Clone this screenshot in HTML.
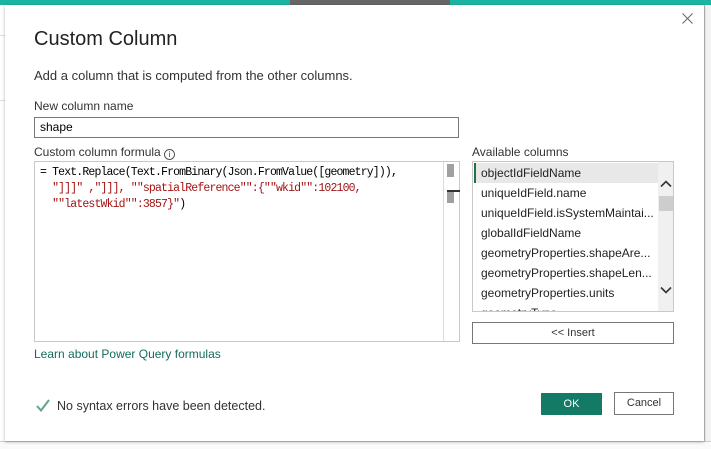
<!DOCTYPE html>
<html><head><style>
*{margin:0;padding:0;box-sizing:border-box}
body{width:711px;height:449px;overflow:hidden;background:#fff;font-family:"Liberation Sans",sans-serif;position:relative;color:#333}
.a{position:absolute}
.t{font-size:12px;color:#333;white-space:nowrap}
.code{font-family:"Liberation Mono",monospace;font-size:11.5px;letter-spacing:-0.85px;line-height:16px;white-space:pre;color:#000}
.s{color:#a31515}
.li{position:absolute;left:1px;width:184px;height:20px;font-size:12px;line-height:20px;padding-left:7px;color:#222;white-space:nowrap;overflow:hidden}
</style></head><body>
<div class="a" style="left:0;top:0;width:711px;height:5px;background:#1bb3a1"></div>
<div class="a" style="left:290px;top:0;width:160px;height:5px;background:#666"></div>
<div class="a" style="left:0;top:35px;width:5px;height:1px;background:#ddd"></div>
<div class="a" style="left:0;top:100px;width:5px;height:1px;background:#ddd"></div>
<div class="a" style="left:704px;top:5px;width:7px;height:444px;background:#f3f3f3;border-left:1px solid #bbb"></div>
<div class="a" style="left:0;top:441px;width:711px;height:8px;background:#fafafa;border-top:1px solid #ccc"></div>
<div class="a" style="left:5px;top:5px;width:699px;height:436px;background:#fff;box-shadow:0 1px 3px rgba(0,0,0,.3)"></div>
<svg class="a" style="left:682px;top:13px" width="11" height="11"><path d="M0.5 0.5L10.5 10.5M10.5 0.5L0.5 10.5" stroke="#666" stroke-width="1"/></svg>
<div class="a" style="left:34px;top:28px;font-size:20px;color:#222">Custom Column</div>
<div class="a t" style="left:34px;top:68px;font-size:13px">Add a column that is computed from the other columns.</div>
<div class="a t" style="left:34px;top:99px">New column name</div>
<div class="a" style="left:34px;top:117px;width:425px;height:21px;border:1px solid #777;font-size:12px;line-height:19px;padding-left:5px;color:#000">shape</div>
<div class="a t" style="left:34px;top:145px">Custom column formula <span style="display:inline-block;width:11px;height:11px;border:1px solid #555;border-radius:50%;font-size:8px;line-height:9px;text-align:center;vertical-align:-1px">i</span></div>
<div class="a" style="left:34px;top:161px;width:426px;height:181px;border:1px solid #c8c8c8"></div>
<div class="a" style="left:443px;top:162px;width:1px;height:179px;background:#ddd"></div>
<div class="a" style="left:447px;top:164px;width:7px;height:13px;background:#a0a0a0"></div>
<div class="a" style="left:447px;top:190px;width:7px;height:13px;background:#a0a0a0"></div>
<div class="a" style="left:447px;top:190px;width:13px;height:2px;background:#333"></div>
<div class="a code" style="left:40px;top:165px">= Text.Replace(Text.FromBinary(Json.FromValue([geometry])),
  <span class="s">"]]]" ,"]]], ""spatialReference"":{""wkid"":102100,</span>
  <span class="s">""latestWkid"":3857}"</span>)</div>
<div class="a t" style="left:472px;top:145px">Available columns</div>
<div class="a" style="left:472px;top:161px;width:202px;height:151px;border:1px solid #c8c8c8;overflow:hidden">
 <div class="li" style="top:1px;background:#e8e8e8;border-left:2px solid #217346;padding-left:5px;width:184px">objectIdFieldName</div>
 <div class="li" style="top:21px">uniqueIdField.name</div>
 <div class="li" style="top:41px">uniqueIdField.isSystemMaintai...</div>
 <div class="li" style="top:61px">globalIdFieldName</div>
 <div class="li" style="top:81px">geometryProperties.shapeAre...</div>
 <div class="li" style="top:101px">geometryProperties.shapeLen...</div>
 <div class="li" style="top:121px">geometryProperties.units</div>
 <div class="li" style="top:141px">geometryType</div>
 <div class="a" style="left:185px;top:0;width:15px;height:149px;background:#f0f0f0"></div>
 <svg class="a" style="left:187px;top:18px" width="12" height="8"><path d="M1 6.5L6 1.5L11 6.5" stroke="#333" stroke-width="1.6" fill="none"/></svg>
 <div class="a" style="left:186px;top:34px;width:14px;height:15px;background:#cdcdcd"></div>
 <svg class="a" style="left:187px;top:124px" width="12" height="8"><path d="M1 1.5L6 6.5L11 1.5" stroke="#333" stroke-width="1.6" fill="none"/></svg>
</div>
<div class="a" style="left:472px;top:322px;width:202px;height:22px;border:1px solid #777;font-size:11px;line-height:20px;text-align:center;color:#333">&lt;&lt; Insert</div>
<div class="a t" style="left:34px;top:347px;color:#146c5e">Learn about Power Query formulas</div>
<svg class="a" style="left:36px;top:399px" width="14" height="13"><path d="M1 7L5 11.5L13 1" stroke="#5fa58a" stroke-width="2" fill="none"/></svg>
<div class="a t" style="left:57px;top:399px;font-size:12.5px">No syntax errors have been detected.</div>
<div class="a" style="left:541px;top:393px;width:61px;height:22px;background:#137a66;color:#fff;font-size:11px;line-height:22px;text-align:center">OK</div>
<div class="a" style="left:614px;top:392px;width:60px;height:23px;border:1px solid #777;font-size:11px;line-height:21px;text-align:center;color:#333">Cancel</div>
</body></html>
